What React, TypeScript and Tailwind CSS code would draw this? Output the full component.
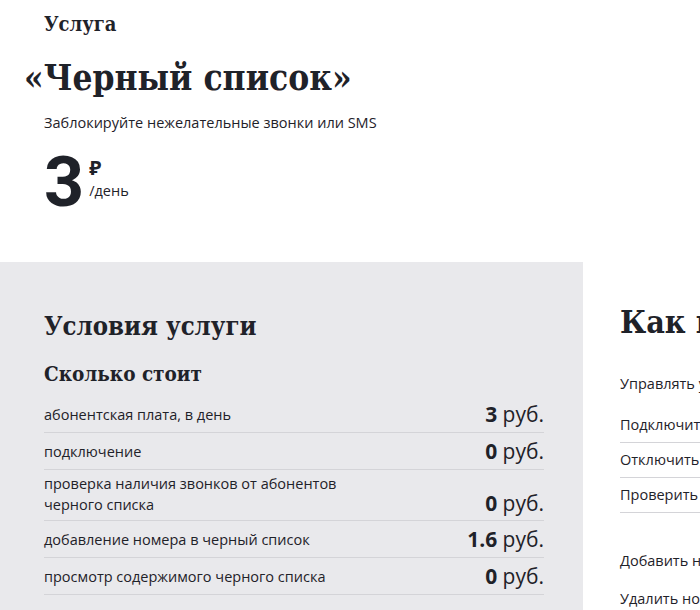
import React from "react";

const serif: React.CSSProperties = {
  fontFamily: '"DejaVu Serif Condensed", "DejaVu Serif", serif',
  fontStretch: "condensed",
};

const rows: { label: React.ReactNode; price: string; two?: boolean }[] = [
  { label: "абонентская плата, в день", price: "3" },
  { label: "подключение", price: "0" },
  {
    label: (
      <>
        проверка наличия звонков от абонентов
        <br />
        черного списка
      </>
    ),
    price: "0",
    two: true,
  },
  { label: "добавление номера в черный список", price: "1.6" },
  { label: "просмотр содержимого черного списка", price: "0" },
];

export default function App() {
  return (
    <div
      className="w-[700px] h-[610px] overflow-hidden bg-white text-[#1f2229]"
      style={{ fontFamily: '"Open Sans", "Noto Sans", sans-serif' }}
    >
      <div className="h-[262px] pt-[9px]">
        <div className="pl-[44px] text-[20px] font-bold leading-[30px]" style={serif}>
          Услуга
        </div>
        <div className="pl-[24px] mt-[17px] text-[35px] font-bold leading-[44px]" style={serif}>
          «Черный список»
        </div>
        <div className="pl-[44px] mt-[13px] text-[14.5px] leading-[20px]">
          Заблокируйте нежелательные звонки или SMS
        </div>
        <div className="pl-[44px] mt-[14px] flex items-start">
          <div
            className="text-[70px] font-bold leading-[70px]"
            style={{ fontFamily: "Roboto, sans-serif" }}
          >
            3
          </div>
          <div className="ml-[5px] mt-[10px] flex flex-col">
            <span className="text-[20px] font-bold leading-[22px]">₽</span>
            <span className="text-[14.5px] leading-[20px] mt-[2px]">/день</span>
          </div>
        </div>
      </div>
      <div className="flex h-[348px]">
        <div className="w-[583px] shrink-0 bg-[#e9e9ec] pl-[44px] pr-[39px] pt-[46px]">
          <div className="text-[25.5px] font-bold leading-[36px]" style={serif}>
            Условия услуги
          </div>
          <div className="mt-[15px] text-[20.5px] font-bold leading-[30px]" style={serif}>
            Сколько стоит
          </div>
          <div className="mt-[7px]">
            {rows.map((r, i) => (
              <div
                key={i}
                className={
                  r.two
                    ? "flex items-end justify-between border-b border-[#d4d4d8] py-[3px]"
                    : "flex items-end justify-between border-b border-[#d4d4d8] py-[4px]"
                }
              >
                <div
                  className={
                    r.two
                      ? "text-[14.5px] leading-[21px] pb-[2px]"
                      : "text-[14.5px] leading-[21px] pb-[3px]"
                  }
                >
                  {r.label}
                </div>
                <div className="text-[21px] leading-[28px] whitespace-nowrap">
                  <span className="font-bold">{r.price}</span> руб.
                </div>
              </div>
            ))}
          </div>
        </div>
        <div className="flex-1 pl-[37px] pt-[40px] overflow-hidden whitespace-nowrap">
          <div className="text-[32px] font-bold leading-[40px]" style={serif}>
            Как включить
          </div>
          <div className="mt-[32px] text-[14.5px] leading-[20px]">Управлять услугой можно</div>
          <div className="mt-[14px]">
            {["Подключить услугу", "Отключить услугу", "Проверить список"].map((t) => (
              <div key={t} className="border-b border-[#d4d4d8] py-[7px] text-[14.5px] leading-[20px]">
                {t}
              </div>
            ))}
          </div>
          <div className="mt-[38px] text-[14.5px] leading-[20px]">Добавить номер</div>
          <div className="mt-[18px] text-[14.5px] leading-[20px]">Удалить номер</div>
        </div>
      </div>
    </div>
  );
}
